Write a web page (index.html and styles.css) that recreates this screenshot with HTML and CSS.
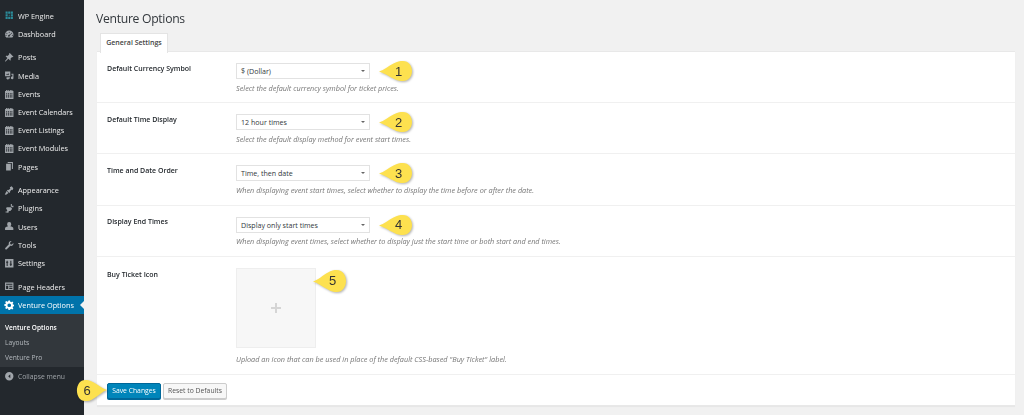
FILE: index.html
```html
<!DOCTYPE html>
<html lang="en">
<head>
<meta charset="utf-8">
<title>Venture Options</title>
<link rel="stylesheet" href="styles.css">
</head>
<body>
<svg class="defs" width="0" height="0" aria-hidden="true">
  <defs>
    <symbol id="i-cal" viewBox="0 0 20 20"><path d="M4 2h2v2h1V2h2v2h2V2h2v2h1V2h2v2h2v15H2V4h2zM4 8v2h2V8zm3.500 0v2h2V8zM11 8v2h2V8zm3 0v2h2V8zM4 11v2h2v-2zm3.500 0v2h2v-2zM11 11v2h2v-2zm3 0v2h2v-2zM4 14v2h2v-2zm3.500 0v2h2v-2zM11 14v2h2v-2zm3 0v2h2v-2z"/></symbol>
    <symbol id="i-gauge" viewBox="0 0 20 20"><path d="M10 3a8 8 0 0 1 8 8c0 2-.7 3.800-2 5H4a8 8 0 0 1-2-5 8 8 0 0 1 8-8zm0 2a1 1 0 1 0 0 2 1 1 0 0 0 0-2zM5.500 7a1 1 0 1 0 0 2 1 1 0 0 0 0-2zm9 0a1 1 0 1 0 0 2 1 1 0 0 0 0-2zM4 11a1 1 0 1 0 0 2 1 1 0 0 0 0-2zm12 0a1 1 0 1 0 0 2 1 1 0 0 0 0-2zm-2-2.500-4.800 3a1.600 1.600 0 1 0 1.700 1.400z"/></symbol>
    <symbol id="i-pin" viewBox="0 0 20 20"><path d="M11 2l7 7-1.500 1-1-.5-3 3c.5 1.500.3 3-.5 4l-3.500-3.500L3 18l-1 0 0-1 4.500-5.500L3 8c1-.8 2.500-1 4-.5l3-3-.5-1z"/></symbol>
    <symbol id="i-media" viewBox="0 0 20 20"><path d="M2 3h10v9H2zm2 6h6L8 6 6.500 8 5.500 7zM14 7h4v8a2.500 2.500 0 1 1-2-2.400V9h-2zM5 14h6a2.500 2.500 0 0 1 .5 2H9.500A2.500 2.500 0 1 1 5 14z"/></symbol>
    <symbol id="i-pages" viewBox="0 0 20 20"><path d="M7 2h10v13h-2V4H7zM4 5h9v13H4z"/></symbol>
    <symbol id="i-brush" viewBox="0 0 20 20"><path d="M14 2l4 4-1 1-.5 3-2-1-3 3 .5 1.500L10 15 5.500 10.500 7.500 9 9 9.500l3-3-1-2 3-1.500zM5 11.500L8.500 15 4 18.500 1.500 18z"/></symbol>
    <symbol id="i-plug" viewBox="0 0 20 20"><path d="M13 2h2v4l-2 1zM16 5h2v3h-3l-1-1zM5 8h8l2 2v2l-3 3H9v1.500C9 18 7.500 19 6 18H3v-2h3v-2.500L4 11z"/></symbol>
    <symbol id="i-user" viewBox="0 0 20 20"><path d="M10 2a3.800 3.800 0 0 1 3.800 4c0 2-1 3.400-2 4 3 .6 6 2 6 4v3H2v-3c0-2 3-3.400 6-4-1-.6-2-2-2-4a3.800 3.800 0 0 1 4-4z"/></symbol>
    <symbol id="i-tool" viewBox="0 0 20 20"><path d="M13.500 2c-2.500 0-4.500 2-4.500 4.500 0 .6.100 1.100.3 1.600L2.500 15a2 2 0 0 0 2.800 2.800l6.700-6.800c.5.200 1 .3 1.500.3 2.500 0 4.500-2 4.500-4.500l-.2-1.200-3 3-2.700-.7-.7-2.700 3-3z"/></symbol>
    <symbol id="i-set" viewBox="0 0 20 20"><path d="M2 2h16v16H2zm3 3v2H4v2h1v6h2V9h1V7H7V5zm7 0v6h-1v2h1v2h2v-2h1v-2h-1V5z"/></symbol>
    <symbol id="i-head" viewBox="0 0 20 20"><path d="M2 3h16v14H2zm2 2v2h12V5zm0 4v6h4V9zm6 0v2h6V9zm0 4v2h6v-2z"/></symbol>
    <symbol id="i-gear" viewBox="0 0 20 20"><path d="M8.500 1h3l.5 2.500 1.500.6 2.200-1.400 2.100 2.100-1.400 2.200.6 1.500 2.500.5v3l-2.500.5-.6 1.500 1.400 2.200-2.100 2.100-2.200-1.400-1.500.6-.5 2.500h-3L8 16.500l-1.500-.6-2.200 1.400-2.100-2.100 1.400-2.200-.6-1.500L.5 11V8L3 7.500l.6-1.500-1.400-2.200 2.100-2.100L6.500 3.100 8 2.500zM10 6.500a3.500 3.500 0 1 0 0 7 3.500 3.500 0 0 0 0-7z"/></symbol>
    <symbol id="i-wpe" viewBox="0 0 20 20"><path d="M3 3h4v4H3zm5 0h4v4H8zm5 0h4v4h-4zM3 8h4v4H3zm10 0h4v4h-4zM3 13h4v4H3zm5 0h4v4H8zm5 0h4v4h-4zM9 9h2v2H9z"/></symbol>
    <symbol id="i-collapse" viewBox="0 0 20 20"><path d="M10 2a8 8 0 1 1 0 16 8 8 0 0 1 0-16zm2 4-4 4 4 4z"/></symbol>
    <symbol id="bubble-left" viewBox="0 0 34 24" preserveAspectRatio="none"><path d="M0 12.500C5 11 10 6 15 3.500 18 1.500 21 1 24 1c5.500 0 9 5 9 11s-3.500 11-9 11c-3 0-6-.5-9-2.500C10 18 5 14 0 12.500z"/></symbol>
    <symbol id="bubble-right" viewBox="0 0 34 24" preserveAspectRatio="none"><path d="M34 11.500C29 13 24 18 19 20.500 16 22.500 13 23 10 23 4.500 23 1 18 1 12S4.500 1 10 1c3 0 6 .5 9 2.500C24 6 29 10 34 11.500z"/></symbol>
  </defs>
</svg>

<div class="page">
  <nav class="sidebar">
    <ul class="menu menu-first">
      <li class="item"><svg class="ico wpe"><use href="#i-wpe"/></svg>WP Engine</li>
      <li class="item"><svg class="ico"><use href="#i-gauge"/></svg>Dashboard</li>
    </ul>
    <ul class="menu">
      <li class="item"><svg class="ico"><use href="#i-pin"/></svg>Posts</li>
      <li class="item"><svg class="ico"><use href="#i-media"/></svg>Media</li>
      <li class="item"><svg class="ico"><use href="#i-cal"/></svg>Events</li>
      <li class="item"><svg class="ico"><use href="#i-cal"/></svg>Event Calendars</li>
      <li class="item"><svg class="ico"><use href="#i-cal"/></svg>Event Listings</li>
      <li class="item"><svg class="ico"><use href="#i-cal"/></svg>Event Modules</li>
      <li class="item"><svg class="ico"><use href="#i-pages"/></svg>Pages</li>
    </ul>
    <ul class="menu">
      <li class="item"><svg class="ico"><use href="#i-brush"/></svg>Appearance</li>
      <li class="item"><svg class="ico"><use href="#i-plug"/></svg>Plugins</li>
      <li class="item"><svg class="ico"><use href="#i-user"/></svg>Users</li>
      <li class="item"><svg class="ico"><use href="#i-tool"/></svg>Tools</li>
      <li class="item"><svg class="ico"><use href="#i-set"/></svg>Settings</li>
    </ul>
    <ul class="menu">
      <li class="item"><svg class="ico"><use href="#i-head"/></svg>Page Headers</li>
      <li class="item item-active"><svg class="ico"><use href="#i-gear"/></svg>Venture Options</li>
    </ul>
    <ul class="submenu">
      <li class="sub sub-current">Venture Options</li>
      <li class="sub">Layouts</li>
      <li class="sub">Venture Pro</li>
    </ul>
    <div class="item collapse"><svg class="ico"><use href="#i-collapse"/></svg>Collapse menu</div>
  </nav>

  <main class="content">
    <h1 class="title">Venture Options</h1>
    <div class="tabs"><span class="tab">General Settings</span></div>
    <form class="panel">
      <div class="row">
        <div class="label">Default Currency Symbol</div>
        <div class="field">
          <div class="control">
            <div class="select">$ (Dollar)</div>
            <div class="callout"><svg class="bubble"><use href="#bubble-left"/></svg><span class="num">1</span></div>
          </div>
          <p class="desc">Select the default currency symbol for ticket prices.</p>
        </div>
      </div>
      <div class="row">
        <div class="label">Default Time Display</div>
        <div class="field">
          <div class="control">
            <div class="select">12 hour times</div>
            <div class="callout"><svg class="bubble"><use href="#bubble-left"/></svg><span class="num">2</span></div>
          </div>
          <p class="desc">Select the default display method for event start times.</p>
        </div>
      </div>
      <div class="row">
        <div class="label">Time and Date Order</div>
        <div class="field">
          <div class="control">
            <div class="select">Time, then date</div>
            <div class="callout"><svg class="bubble"><use href="#bubble-left"/></svg><span class="num">3</span></div>
          </div>
          <p class="desc">When displaying event start times, select whether to display the time before or after the date.</p>
        </div>
      </div>
      <div class="row">
        <div class="label">Display End Times</div>
        <div class="field">
          <div class="control">
            <div class="select">Display only start times</div>
            <div class="callout"><svg class="bubble"><use href="#bubble-left"/></svg><span class="num">4</span></div>
          </div>
          <p class="desc">When displaying event times, select whether to display just the start time or both start and end times.</p>
        </div>
      </div>
      <div class="row row-icon">
        <div class="label">Buy Ticket Icon</div>
        <div class="field">
          <div class="control control-top">
            <div class="upload"><span class="plus"></span></div>
            <div class="callout callout-five"><svg class="bubble"><use href="#bubble-left"/></svg><span class="num">5</span></div>
          </div>
          <p class="desc desc-upload">Upload an icon that can be used in place of the default CSS-based "Buy Ticket" label.</p>
        </div>
      </div>
      <div class="actions">
        <div class="callout callout-six"><svg class="bubble"><use href="#bubble-right"/></svg><span class="num">6</span></div>
        <button type="button" class="btn btn-primary">Save Changes</button>
        <button type="button" class="btn btn-reset">Reset to Defaults</button>
      </div>
    </form>
  </main>
</div>
</body>
</html>
```
FILE: styles.css
```css
* { box-sizing: border-box; }
html, body { margin: 0; height: 415px; overflow: hidden; }
body {
  background: #f1f1f1;
  font-family: "Open Sans", "Liberation Sans", sans-serif;
  font-size: 7.3px;
  color: #444;
}
.defs { position: absolute; }
.page {
  display: flex;
  height: 415px;
  filter: blur(0.45px);
}

/* Sidebar */
.sidebar {
  width: 84px;
  flex: none;
  background: #23282d;
  color: #eee;
  padding-top: 6.500px;
}
.menu, .submenu { list-style: none; margin: 0; padding: 0; }
.menu { margin-bottom: 5.500px; }
.menu:nth-of-type(4) { margin-bottom: 0; }
.item {
  position: relative;
  display: flex;
  align-items: center;
  height: 18.200px;
  padding-left: 3.500px;
  gap: 4px;
  white-space: nowrap;
}
.ico {
  width: 10.500px;
  height: 10.500px;
  flex: none;
  fill: #a0a5aa;
}
.wpe { fill: #2b8c9b; }
.item-active { background: #0073aa; color: #fff; }
.item-active .ico { fill: #fff; }
.item-active::after {
  content: "";
  position: absolute;
  right: 0;
  top: 5px;
  border: 4px solid transparent;
  border-right-color: #f1f1f1;
  border-left-width: 0;
}
.submenu {
  background: #32373c;
  padding: 5.500px 0 5px;
  height: 53px;
}
.sub {
  height: 15px;
  line-height: 15px;
  padding-left: 5px;
  color: #b4b9be;
  font-size: 6.700px;
}
.sub-current { color: #fff; font-weight: 600; font-size: 6.500px; }
.collapse { color: #a0a5aa; height: 18px; font-size: 6.800px; }

/* Content */
.content {
  flex: 1;
  min-width: 0;
  padding: 0 9px 0 13px;
}
.title {
  margin: 0 0 0 -1px;
  height: 33px;
  padding-top: 11px;
  font-size: 12.200px;
  letter-spacing: -.3px;
  line-height: 16px;
  font-weight: 400;
  color: #32373c;
}
.tabs { display: flex; height: 18px; padding-left: 3px; }
.tab {
  display: block;
  width: 68px;
  height: 20px;
  border: 1px solid #e4e4e4;
  border-bottom: 0;
  background: #fff;
  font-weight: 600;
  font-size: 7px;
  line-height: 18px;
  text-align: center;
  color: #444;
  position: relative;
}
.panel {
  background: #fff;
  border: 1px solid #e8e8e8;
  border-width: 1px 0 1px 0;
  height: 355px;
  box-shadow: 0 1px 1px rgba(0, 0, 0, .04);
}
.row {
  display: flex;
  height: 51.200px;
  padding: 10.500px 0 0 10px;
  border-bottom: 1px solid #f0f0f0;
}
.row-icon { height: 118.500px; padding-top: 11.200px; }
.label {
  width: 129px;
  flex: none;
  margin-top: -1px;
  font-weight: 600;
  font-size: 7px;
  line-height: 14px;
  color: #23282d;
}
.row-icon .label { margin-top: 0; }
.control { display: flex; align-items: center; gap: 9px; height: 17px; }
.control-top { align-items: flex-start; height: 80px; gap: 0; }
.select {
  position: relative;
  width: 134px;
  height: 16px;
  border: 1px solid #e2e2e2;
  background: #fff;
  padding-left: 4px;
  line-height: 14px;
  font-size: 7.100px;
  color: #32373c;
}
.select::after {
  content: "";
  position: absolute;
  right: 4px;
  top: 6px;
  border: 2px solid transparent;
  border-top: 2.500px solid #666;
  border-bottom-width: 0;
}
.desc {
  margin: 3px 0 0;
  font-style: italic;
  font-size: 7.300px;
  line-height: 10px;
  color: #777;
  white-space: nowrap;
}
.desc-upload { margin-top: 6px; }
.upload {
  position: relative;
  display: flex;
  align-items: center;
  justify-content: center;
  width: 80px;
  height: 80px;
  background: #f7f7f7;
  border: 1px solid #eee;
}
.plus { position: relative; width: 10px; height: 10px; }
.plus::before, .plus::after {
  content: "";
  position: absolute;
  background: #d5d5d5;
}
.plus::before { left: 0; right: 0; top: 4px; height: 2px; }
.plus::after { top: 0; bottom: 0; left: 4px; width: 2px; }

/* Callouts */
.callout {
  position: relative;
  width: 34px;
  height: 22px;
  flex: none;
  display: flex;
  align-items: center;
  justify-content: center;
  padding-left: 5px;
}
.bubble {
  position: absolute;
  inset: 0;
  width: 100%;
  height: 100%;
  fill: #fde14f;
  filter: drop-shadow(1px 1px 1px rgba(0, 0, 0, .3));
}
.num {
  position: relative;
  font-family: "Liberation Sans", sans-serif;
  font-size: 13px;
  color: #333;
}
.callout-five { margin: 1px 0 0 -3px; height: 24px; }
.callout-six { width: 31px; height: 23px; padding: 0 9px 0 0; margin-right: -2px; }

/* Actions */
.actions {
  display: flex;
  align-items: center;
  gap: 2px;
  height: 31px;
  margin-left: -21px;
}
.btn {
  height: 16px;
  padding: 0;
  border: 1px solid #ccc;
  background: #f7f7f7;
  color: #555;
  font: 6.800px/14px "Open Sans", "Liberation Sans", sans-serif;
  border-radius: 2px;
  box-shadow: 0 1px 0 #ccc;
}
.btn-reset { width: 64px; }
.btn-primary {
  width: 54px;
  background: #0085ba;
  border-color: #006799;
  color: #fff;
  box-shadow: 0 1px 0 #006799;
}
```
